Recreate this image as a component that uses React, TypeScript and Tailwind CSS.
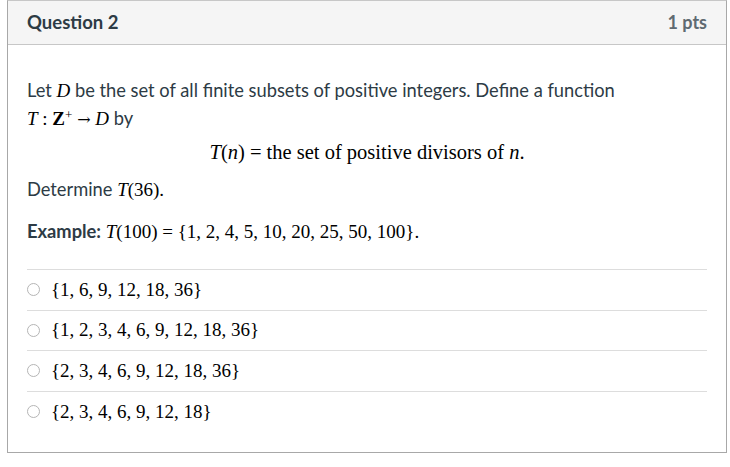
import React from "react";

const M = ({ children, size = "text-[19px]" }: { children: React.ReactNode; size?: string }) => (
  <span className={`${size} leading-none [font-family:'Liberation_Serif','DejaVu_Serif',serif] text-black`}>{children}</span>
);
const I = ({ children }: { children: React.ReactNode }) => <i>{children}</i>;

const options = [
  "{1, 6, 9, 12, 18, 36}",
  "{1, 2, 3, 4, 6, 9, 12, 18, 36}",
  "{2, 3, 4, 6, 9, 12, 18, 36}",
  "{2, 3, 4, 6, 9, 12, 18}",
];

export default function App() {
  return (
    <div className="w-[730px] h-[467px] bg-white [font-family:Lato,'Noto_Sans',sans-serif] text-[#2d3b45]">
      <div className="ml-[7px] w-[720px] h-[453px] border border-[#a8a8a8] border-t-[#c7c7c7] flex flex-col">
        <div className="h-[44px] bg-[#f5f5f5] border-b border-[#c7c7c7] flex items-center justify-between pl-[19px] pr-[19px]">
          <span className="text-[18.5px] font-bold">Question 2</span>
          <span className="text-[18px] font-bold text-[#5f6a71]">1 pts</span>
        </div>
        <div className="pl-[19px] pr-[19px] pt-[31px]">
          <p className="text-[18.3px] leading-[28px]">
            Let <M><I>D</I></M> be the set of all finite subsets of positive integers. Define a function
            <br />
            <M>
              <I>T</I> : <b>Z</b>
              <sup className="text-[13px] leading-none">+</sup>{" "}
              <span className="[font-family:'DejaVu_Serif',serif] text-[16px] leading-none">→</span> <I>D</I>
            </M>{" "}
            by
          </p>
          <div className="text-center mt-[9px] leading-[24px]">
            <M size="text-[20.5px]">
              <I>T</I>(<I>n</I>) = the set of positive divisors of <I>n</I>.
            </M>
          </div>
          <p className="text-[18.3px] leading-[24px] mt-[12px]">
            Determine <M><I>T</I>(36).</M>
          </p>
          <p className="text-[18.3px] leading-[24px] mt-[18px]">
            <b>Example:</b> <M><I>T</I>(100) = {"{1, 2, 4, 5, 10, 20, 25, 50, 100}"}.</M>
          </p>
          <div className="mt-[26px] border-t border-[#dddddd]">
            {options.map((o, i) => (
              <div
                key={i}
                className={`h-[40.5px] flex items-center ${i < options.length - 1 ? "border-b border-[#dddddd]" : ""}`}
              >
                <span className="w-[13px] h-[13px] rounded-full border border-[#b5b5b5] bg-white" />
                <span className="ml-[11px]">
                  <M>{o}</M>
                </span>
              </div>
            ))}
          </div>
        </div>
      </div>
    </div>
  );
}
